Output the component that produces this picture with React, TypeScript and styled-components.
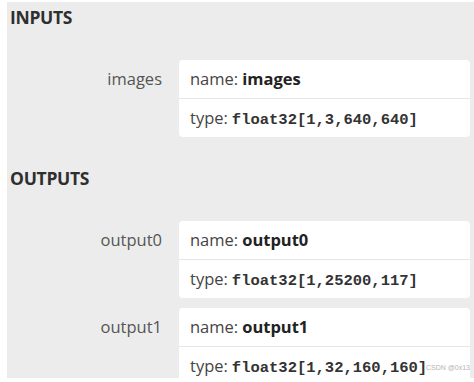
import React from 'react';
import styled, { createGlobalStyle } from 'styled-components';

const GlobalStyle = createGlobalStyle`
  html, body {
    margin: 0;
    padding: 0;
    background: #ffffff;
  }
  body {
    font-family: "Open Sans", "Noto Sans", sans-serif;
  }
`;

const Panel = styled.div`
  position: relative;
  margin: 2px 0 0 7px;
  height: 376px;
  padding: 4px 4px 0 3px;
  box-sizing: border-box;
  background: #ececec;
  overflow: hidden;
`;

const Heading = styled.div`
  font-size: 17.5px;
  line-height: 23px;
  font-weight: 700;
  color: #2f2f2f;
  letter-spacing: -0.3px;
`;

const Section = styled.div<{ bottom: number }>`
  display: flex;
  flex-direction: column;
  gap: 10px;
  padding: 31px 0 ${({ bottom }) => bottom}px;
`;

const Entry = styled.div`
  display: grid;
  grid-template-columns: 152px 1fr;
  column-gap: 17px;
  align-items: start;
`;

const Label = styled.div`
  text-align: right;
  font-size: 16.5px;
  line-height: 38px;
  color: #555555;
`;

const Card = styled.div`
  background: #ffffff;
  border-radius: 4px;
  overflow: hidden;
`;

const Row = styled.div<{ divider?: boolean }>`
  height: 38px;
  line-height: 38px;
  padding: 0 11px;
  font-size: 16.5px;
  color: #444444;
  border-top: ${({ divider }) => (divider ? '1px solid #e6e6e6' : 'none')};
  white-space: nowrap;
`;

const Key = styled.span`
  margin-right: 4px;
`;

const Name = styled.b`
  color: #222222;
`;

const Shape = styled.code`
  font-family: "Liberation Mono", "DejaVu Sans Mono", monospace;
  font-size: 15.5px;
  font-weight: 700;
  color: #333333;
`;

const Watermark = styled.div`
  position: absolute;
  right: 4px;
  bottom: 7px;
  font-size: 7px;
  color: #b5b5b5;
  font-family: "Liberation Sans", sans-serif;
`;

interface Tensor {
  name: string;
  type: string;
}

const inputs: Tensor[] = [{ name: 'images', type: 'float32[1,3,640,640]' }];

const outputs: Tensor[] = [
  { name: 'output0', type: 'float32[1,25200,117]' },
  { name: 'output1', type: 'float32[1,32,160,160]' },
];

const TensorEntry: React.FC<{ tensor: Tensor }> = ({ tensor }) => (
  <Entry>
    <Label>{tensor.name}</Label>
    <Card>
      <Row>
        <Key>name:</Key>
        <Name>{tensor.name}</Name>
      </Row>
      <Row divider>
        <Key>type:</Key>
        <Shape>{tensor.type}</Shape>
      </Row>
    </Card>
  </Entry>
);

export default function App() {
  return (
    <>
      <GlobalStyle />
      <Panel>
        <Heading>INPUTS</Heading>
        <Section bottom={30}>
          {inputs.map((t) => (
            <TensorEntry key={t.name} tensor={t} />
          ))}
        </Section>
        <Heading>OUTPUTS</Heading>
        <Section bottom={0}>
          {outputs.map((t) => (
            <TensorEntry key={t.name} tensor={t} />
          ))}
        </Section>
        <Watermark>CSDN @0x13</Watermark>
      </Panel>
    </>
  );
}
